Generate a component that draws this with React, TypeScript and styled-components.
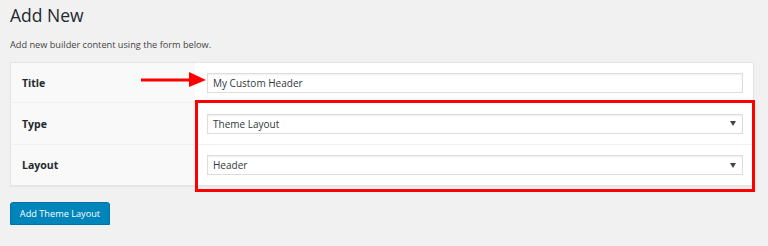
import React from 'react';
import styled, { createGlobalStyle } from 'styled-components';

const GlobalStyle = createGlobalStyle`
  html, body {
    margin: 0;
    padding: 0;
    background: #f1f1f1;
  }
  body {
    font-family: "Open Sans", "Noto Sans", sans-serif;
    color: #23282d;
  }
`;

type Field = {
  label: string;
  value: string;
  kind: 'text' | 'select';
  height: number;
};

const fields: Field[] = [
  { label: 'Title', value: 'My Custom Header', kind: 'text', height: 39 },
  { label: 'Type', value: 'Theme Layout', kind: 'select', height: 42 },
  { label: 'Layout', value: 'Header', kind: 'select', height: 41 },
];

export default function App() {
  return (
    <>
      <GlobalStyle />
      <Page>
        <Heading>Add New</Heading>
        <Description>Add new builder content using the form below.</Description>
        <Panel>
          {fields.map((field, i) => (
            <Row key={field.label} $height={field.height} $first={i === 0}>
              <LabelCell>{field.label}</LabelCell>
              <FieldCell>
                <Input>
                  <span>{field.value}</span>
                  {field.kind === 'select' && <Caret />}
                </Input>
              </FieldCell>
            </Row>
          ))}
          <Arrow width="66" height="18" viewBox="0 0 66 18">
            <rect x="0" y="7.5" width="50" height="3" fill="#f00" />
            <polygon points="48,1 65,9 48,16" fill="#f00" />
          </Arrow>
          <Highlight />
        </Panel>
        <PrimaryButton>Add Theme Layout</PrimaryButton>
      </Page>
    </>
  );
}

const Page = styled.div`
  padding: 0 0 0 10px;
  width: 744px;
`;

const Heading = styled.h1`
  margin: 0;
  padding-top: 3px;
  font-size: 17.5px;
  line-height: 25px;
  font-weight: 400;
  color: #23282d;
`;

const Description = styled.p`
  margin: 10px 0 0;
  font-size: 9.2px;
  line-height: 14px;
  color: #444;
`;

const Panel = styled.div`
  position: relative;
  margin-top: 10px;
  background: #fff;
  border: 1px solid #e5e5e5;
  box-shadow: 0 1px 1px rgba(0, 0, 0, 0.04);
`;

const Row = styled.div<{ $height: number; $first: boolean }>`
  display: flex;
  height: ${(p) => p.$height}px;
  border-top: ${(p) => (p.$first ? 'none' : '1px solid #f1f1f1')};
  box-sizing: border-box;
`;

const LabelCell = styled.div`
  width: 184px;
  flex-shrink: 0;
  background: #f9f9f9;
  display: flex;
  align-items: center;
  padding-left: 11px;
  box-sizing: border-box;
  font-size: 10.5px;
  font-weight: 700;
  color: #23282d;
`;

const FieldCell = styled.div`
  flex: 1;
  display: flex;
  align-items: center;
  padding: 0 10px 0 12px;
`;

const Input = styled.div`
  flex: 1;
  height: 20px;
  display: flex;
  align-items: center;
  justify-content: space-between;
  padding: 0 6px 0 5px;
  border: 1px solid #ddd;
  box-shadow: inset 0 1px 2px rgba(0, 0, 0, 0.07);
  box-sizing: border-box;
  background: #fff;
  font-size: 10px;
  color: #32373c;
`;

const Caret = styled.span`
  width: 0;
  height: 0;
  border-left: 3px solid transparent;
  border-right: 3px solid transparent;
  border-top: 5px solid #444;
`;

const Arrow = styled.svg`
  position: absolute;
  left: 130px;
  top: 8px;
`;

const Highlight = styled.div`
  position: absolute;
  left: 184px;
  top: 37px;
  width: 560px;
  height: 92px;
  border: 3px solid #f00;
  box-sizing: border-box;
  pointer-events: none;
`;

const PrimaryButton = styled.button`
  margin-top: 16px;
  width: 100px;
  height: 23px;
  padding: 0;
  background: #0085ba;
  border: 1px solid #0073aa;
  border-radius: 3px;
  box-shadow: 0 1px 0 #006799;
  color: #fff;
  font-family: "Open Sans", "Noto Sans", sans-serif;
  font-size: 9.2px;
`;
